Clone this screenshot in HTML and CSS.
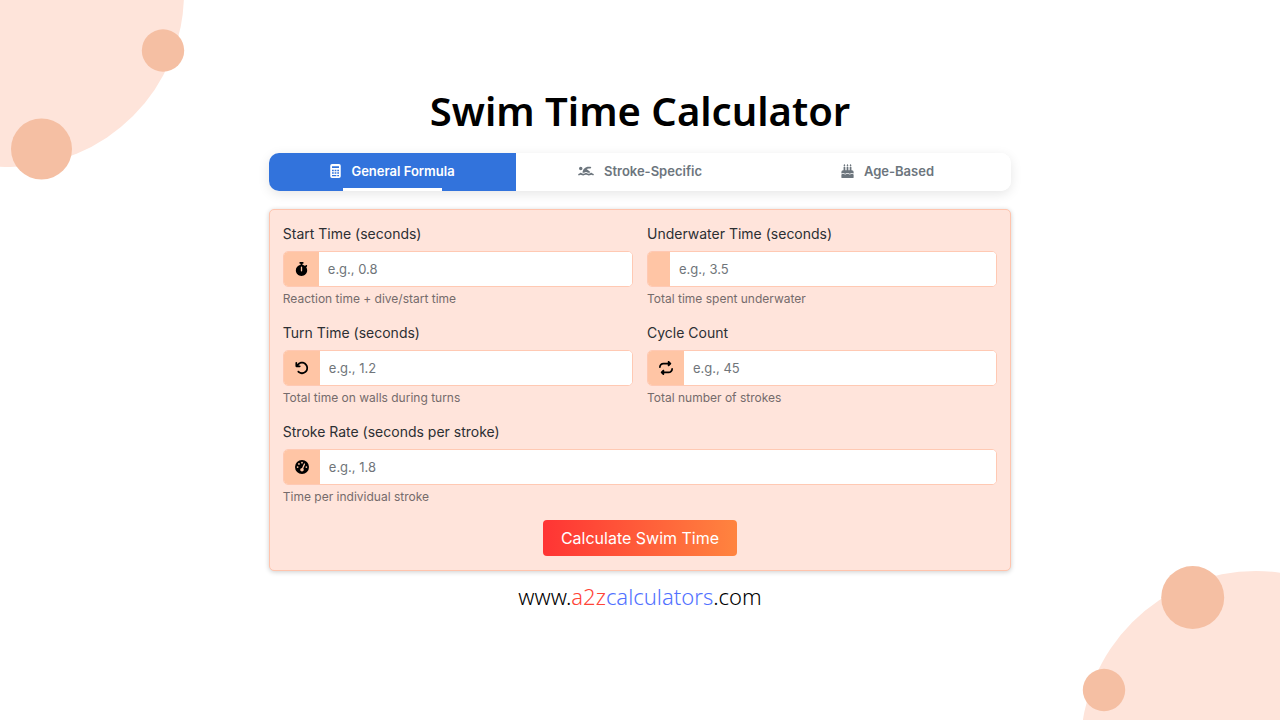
FILE: index.html
```html
<!DOCTYPE html>
<html lang="en">
<head>
    <meta charset="UTF-8">
    <meta name="viewport" content="width=device-width, initial-scale=1.0">
    <title>Swim Time Calculator</title>
    <link rel="stylesheet" href="styles.css">
</head>
<body>
    <svg class="corner corner-top" viewBox="0 0 200 200" aria-hidden="true">
        <circle class="blob" cx="10" cy="-7" r="174"/>
        <circle class="dot" cx="163" cy="50.500" r="21.200"/>
        <circle class="dot" cx="41.500" cy="149" r="30.500"/>
    </svg>
    <svg class="corner corner-bottom" viewBox="0 0 200 200" aria-hidden="true">
        <circle class="blob" cx="176" cy="226" r="175"/>
        <circle class="dot" cx="112.700" cy="77.500" r="31.500"/>
        <circle class="dot" cx="24" cy="170" r="21.200"/>
    </svg>

    <main class="calculator">
        <h1>Swim Time Calculator</h1>

        <div class="tabs">
            <button type="button" class="tab active">
                <svg class="icon" viewBox="0 0 384 512" width="11" height="14" aria-hidden="true"><path fill-rule="evenodd" d="M64 0h256a64 64 0 0 1 64 64v384a64 64 0 0 1-64 64H64a64 64 0 0 1-64-64V64A64 64 0 0 1 64 0zM64 80v64h256V80zM64 208v56h64v-56zM160 208v56h64v-56zM256 208v56h64v-56zM64 304v56h64v-56zM160 304v56h64v-56zM256 304v56h64v-56zM64 400v48h160v-48zM256 400v48h64v-48z"/></svg>
                General Formula
            </button>
            <button type="button" class="tab">
                <svg class="icon" viewBox="0 0 576 512" width="16" height="14" aria-hidden="true"><path d="M309.500 178.400L447.900 297.100c-1.600 .9-3.200 2-4.800 3c-18 12.400-40.100 20.300-59.200 20.300c-19.600 0-40.800-7.700-59.200-20.300c-22.100-15.500-51.600-15.500-73.700 0c-17.100 11.800-38 20.300-59.200 20.300c-10.100 0-21.100-2.200-31.900-6.200C163.100 193.200 262.200 96 384 96h64c17.700 0 32 14.300 32 32s-14.300 32-32 32H384c-26.900 0-52.300 6.600-74.500 18.400zM160 160A64 64 0 1 1 32 160a64 64 0 1 1 128 0zM306.500 325.900C329 341.400 356.500 352 384 352c26.900 0 55.400-10.800 77.400-26.100c11.900-8.500 28.100-7.800 39.200 1.700c14.400 11.900 32.500 21 50.600 25.200c17.200 4 27.900 21.200 23.900 38.400s-21.200 27.900-38.400 23.900c-24.500-5.700-44.900-16.500-58.200-25C449.500 405.700 417 416 384 416c-31.900 0-60.600-9.900-80.400-18.900c-5.800-2.700-11.100-5.300-15.600-7.700c-4.500 2.400-9.700 5.100-15.600 7.700c-19.800 9-48.500 18.900-80.400 18.900c-33 0-65.500-10.300-94.500-25.800c-13.400 8.400-33.700 19.300-58.200 25c-17.200 4-34.400-6.700-38.400-23.900s6.700-34.400 23.900-38.400c18.100-4.200 36.200-13.300 50.600-25.200c11.100-9.400 27.300-10.100 39.200-1.700C136.700 341.200 165.100 352 192 352c27.500 0 55-10.600 77.500-26.100c11.100-7.900 25.900-7.900 37 0z"/></svg>
                Stroke-Specific
            </button>
            <button type="button" class="tab">
                <svg class="icon" viewBox="0 0 448 512" width="13" height="14" aria-hidden="true"><path d="M82 60c0-20 30-60 30-60s30 40 30 60a30 30 0 0 1-60 0zM194 60c0-20 30-60 30-60s30 40 30 60a30 30 0 0 1-60 0zM306 60c0-20 30-60 30-60s30 40 30 60a30 30 0 0 1-60 0zM80 112h64v112h48V112h64v112h48V112h64v112h16a64 64 0 0 1 64 64v62c-20 0-32-18-56-18-32 0-42 24-84 24s-52-24-84-24-42 24-84 24-52-24-84-24c-24 0-36 14-56 18v-62a64 64 0 0 1 64-64h16zM0 380c28-2 38-20 56-20 28 0 38 24 84 24s56-24 84-24 38 24 84 24 56-24 84-24c20 0 30 18 56 22v98a32 32 0 0 1-32 32H32a32 32 0 0 1-32-32z"/></svg>
                Age-Based
            </button>
        </div>

        <form class="panel">
            <div class="field">
                <label for="start-time">Start Time (seconds)</label>
                <div class="input-group">
                    <span class="prefix">
                        <svg viewBox="0 0 448 512" width="13" height="14" aria-hidden="true"><path d="M176 0c-17.700 0-32 14.300-32 32s14.300 32 32 32l16 0 0 34.400C92.300 113.800 16 200 16 304c0 114.900 93.100 208 208 208s208-93.100 208-208c0-41.800-12.300-80.700-33.500-113.200l24.100-24.100c12.500-12.500 12.500-32.800 0-45.300s-32.800-12.500-45.300 0L355.700 143c-28.100-23-62.200-38.800-99.700-44.600L256 64l16 0c17.700 0 32-14.300 32-32s-14.300-32-32-32L224 0 176 0zm72 192l0 128c0 13.300-10.700 24-24 24s-24-10.700-24-24l0-128c0-13.300 10.700-24 24-24s24 10.700 24 24z"/></svg>
                    </span>
                    <input type="text" id="start-time" placeholder="e.g., 0.8">
                </div>
                <small>Reaction time + dive/start time</small>
            </div>
            <div class="field">
                <label for="underwater-time">Underwater Time (seconds)</label>
                <div class="input-group">
                    <span class="prefix"></span>
                    <input type="text" id="underwater-time" placeholder="e.g., 3.5">
                </div>
                <small>Total time spent underwater</small>
            </div>
            <div class="field">
                <label for="turn-time">Turn Time (seconds)</label>
                <div class="input-group">
                    <span class="prefix">
                        <svg viewBox="0 0 512 512" width="14" height="14" aria-hidden="true"><path d="M125.700 160H176c17.700 0 32 14.300 32 32s-14.300 32-32 32H48c-17.700 0-32-14.300-32-32V64c0-17.700 14.300-32 32-32s32 14.300 32 32v51.200L97.600 97.600c87.500-87.500 229.300-87.500 316.800 0s87.500 229.300 0 316.800s-229.300 87.500-316.800 0c-12.500-12.500-12.500-32.800 0-45.300s32.800-12.500 45.300 0c62.500 62.500 163.800 62.500 226.300 0s62.500-163.800 0-226.300s-163.800-62.500-226.300 0L125.700 160z"/></svg>
                    </span>
                    <input type="text" id="turn-time" placeholder="e.g., 1.2">
                </div>
                <small>Total time on walls during turns</small>
            </div>
            <div class="field">
                <label for="cycle-count">Cycle Count</label>
                <div class="input-group">
                    <span class="prefix">
                        <svg viewBox="0 0 512 512" width="14" height="14" aria-hidden="true"><path d="M0 224c0 17.700 14.300 32 32 32s32-14.300 32-32c0-53 43-96 96-96H320v32c0 12.900 7.800 24.600 19.800 29.600s25.700 2.200 34.900-6.900l64-64c12.500-12.500 12.500-32.800 0-45.300l-64-64c-9.200-9.200-22.900-11.900-34.900-6.900S320 19.100 320 32V64H160C71.600 64 0 135.600 0 224zm512 64c0-17.700-14.300-32-32-32s-32 14.300-32 32c0 53-43 96-96 96H192V352c0-12.900-7.800-24.600-19.800-29.600s-25.700-2.200-34.900 6.900l-64 64c-12.500 12.500-12.500 32.800 0 45.300l64 64c9.200 9.200 22.900 11.900 34.900 6.900s19.800-16.600 19.800-29.600V448H352c88.400 0 160-71.600 160-160z"/></svg>
                    </span>
                    <input type="text" id="cycle-count" placeholder="e.g., 45">
                </div>
                <small>Total number of strokes</small>
            </div>
            <div class="field wide">
                <label for="stroke-rate">Stroke Rate (seconds per stroke)</label>
                <div class="input-group">
                    <span class="prefix">
                        <svg viewBox="0 0 512 512" width="14" height="14" aria-hidden="true"><path fill-rule="evenodd" d="M0 256a256 256 0 1 1 512 0A256 256 0 1 1 0 256zM288 96a32 32 0 1 0 -64 0 32 32 0 1 0 64 0zM256 416c35.300 0 64-28.700 64-64c0-17.400-6.900-33.100-18.100-44.600L366 161.700c5.300-12.100-.2-26.300-12.300-31.600s-26.300 .2-31.600 12.300L257.900 288c-.6 0-1.300 0-1.900 0c-35.300 0-64 28.700-64 64s28.700 64 64 64zM176 144a32 32 0 1 0 -64 0 32 32 0 1 0 64 0zM96 288a32 32 0 1 0 0-64 32 32 0 1 0 0 64zm352-32a32 32 0 1 0 -64 0 32 32 0 1 0 64 0z"/></svg>
                    </span>
                    <input type="text" id="stroke-rate" placeholder="e.g., 1.8">
                </div>
                <small>Time per individual stroke</small>
            </div>
            <button type="button" class="calculate">Calculate Swim Time</button>
        </form>

        <a class="site-link" href="#">www.<span class="red">a2z</span><span class="blue">calculators</span>.com</a>
    </main>
</body>
</html>
```
FILE: styles.css
```css
* {
    box-sizing: border-box;
}

body {
    margin: 0;
    min-height: 100vh;
    background: #fff;
    font-family: Inter, Roboto, sans-serif;
    color: #212529;
}

/* corner decorations */
.corner {
    position: absolute;
    width: 200px;
    height: 200px;
    z-index: -1;
}

.corner-top {
    top: 0;
    left: 0;
}

.corner-bottom {
    right: 0;
    bottom: 0;
}

.blob {
    fill: #fee4da;
}

.dot {
    fill: #f5bfa3;
}

.calculator {
    display: flex;
    flex-direction: column;
    width: 58%;
    min-width: 320px;
    margin: 0 auto;
    padding-top: 83px;
}

h1 {
    margin: 0 0 14px;
    font-family: "Noto Sans", "Open Sans", sans-serif;
    font-size: 40px;
    line-height: 56px;
    font-weight: 600;
    text-align: center;
    color: #000;
}

.tabs {
    display: flex;
    margin-bottom: 18px;
    border-radius: 10px;
    background: #fff;
    overflow: hidden;
    box-shadow: 0 3px 12px rgba(0, 0, 0, 0.1);
}

.tab {
    position: relative;
    flex: 1;
    display: flex;
    justify-content: center;
    align-items: center;
    gap: 10px;
    height: 38px;
    padding: 0 0 2px;
    border: none;
    background: #fff;
    font-family: inherit;
    font-size: 13px;
    font-weight: 600;
    color: #6c757d;
    cursor: pointer;
}

.tab.active {
    background: #3273dc;
    color: #fff;
}

.tab.active::after {
    content: "";
    position: absolute;
    left: 30%;
    bottom: 0;
    width: 40%;
    height: 3px;
    background: #fff;
}

svg path {
    fill: currentColor;
}

.panel {
    display: grid;
    grid-template-columns: 1fr 1fr;
    gap: 15px 14px;
    padding: 13px 13px 14px;
    border: 1px solid #ffc4ad;
    border-radius: 5px;
    background: #ffe4db;
    box-shadow: 0 1px 5px rgba(0, 0, 0, 0.2);
}

.field {
    display: flex;
    flex-direction: column;
}

.wide {
    grid-column: 1 / -1;
}

.field label {
    margin-bottom: 6px;
    font-size: 14px;
    line-height: 22px;
    color: #2c2f33;
}

.input-group {
    display: flex;
    height: 36px;
    margin-bottom: 4px;
    border: 1px solid #ffc9b3;
    border-radius: 5px;
    background: #fff;
    overflow: hidden;
}

.prefix {
    display: flex;
    align-items: center;
    padding: 0 11px;
    background: #ffc5a5;
    color: #000;
}

.input-group input {
    flex: 1;
    min-width: 0;
    padding: 0 9px;
    border: none;
    outline: none;
    background: #fff;
    font-family: inherit;
    font-size: 13px;
    color: #212529;
}

.input-group input::placeholder {
    color: #70757a;
}

.field small {
    font-size: 12px;
    line-height: 16px;
    color: #756b6b;
}

.calculate {
    grid-column: 1 / -1;
    justify-self: center;
    height: 36px;
    padding: 0 18px;
    border: none;
    border-radius: 4px;
    background: linear-gradient(90deg, #ff3434, #ff843f);
    font-family: inherit;
    font-size: 16px;
    color: #fff;
    cursor: pointer;
}

.site-link {
    align-self: center;
    margin-top: 10px;
    font-family: "Noto Sans", "Open Sans", sans-serif;
    font-size: 22px;
    line-height: 30px;
    font-weight: 300;
    color: #000;
    text-decoration: none;
}

.red {
    color: #ff4438;
}

.blue {
    color: #5271ff;
}
```
